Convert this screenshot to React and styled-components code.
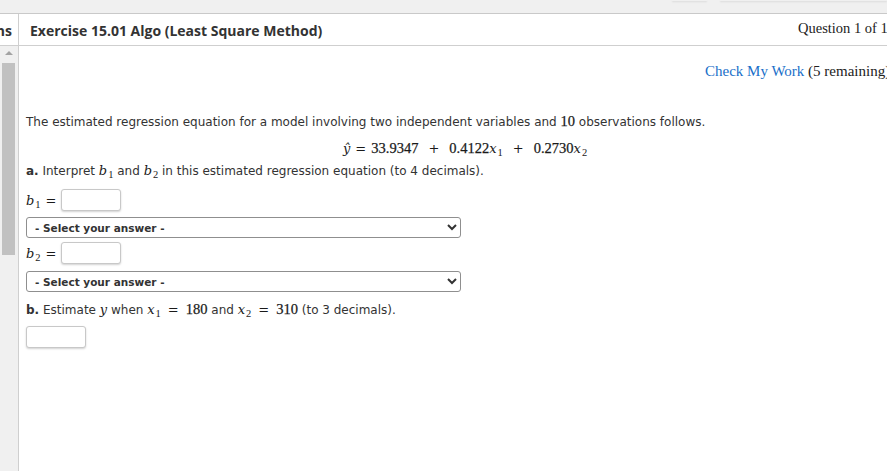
import React from "react";
import styled, { createGlobalStyle } from "styled-components";

const Global = createGlobalStyle`
  html, body {
    margin: 0;
    padding: 0;
    overflow: hidden;
    background: #fff;
  }
`;

const Page = styled.div`
  width: 887px;
  height: 471px;
  overflow: hidden;
  display: flex;
  flex-direction: column;
  background: #fff;
`;

const TopBar = styled.div`
  height: 13px;
  flex-shrink: 0;
  background: #f0f0f0;
  border-bottom: 1px solid #c9c9c9;
  display: flex;
  justify-content: flex-end;
  align-items: flex-start;
  gap: 13px;
`;

const GhostButton = styled.div`
  width: ${(p) => p.$w}px;
  height: 1px;
  box-shadow: 0 1px 2px rgba(0, 0, 0, 0.12);
`;

const Main = styled.div`
  flex: 1;
  display: flex;
  min-height: 0;
`;

const Sidebar = styled.div`
  width: 18px;
  flex-shrink: 0;
  border-right: 1px solid #cfcfcf;
  display: flex;
  flex-direction: column;
  overflow: hidden;
`;

const SideHead = styled.div`
  height: 31px;
  border-bottom: 1px solid #cfcfcf;
  display: flex;
  align-items: center;
  justify-content: flex-end;
  padding-right: 6px;
  overflow: hidden;
  font-family: "Open Sans", sans-serif;
  font-weight: 700;
  font-size: 14px;
  color: #333;
  white-space: nowrap;
`;

const SideLabel = styled.span`
  flex-shrink: 0;
  margin-top: 2px;
`;

const SideBody = styled.div`
  flex: 1;
  background: #f0f0f0;
  display: flex;
  flex-direction: column;
  align-items: center;
  padding-top: 5px;
`;

const ScrollArrow = styled.div`
  width: 0;
  height: 0;
  border-left: 4px solid transparent;
  border-right: 4px solid transparent;
  border-bottom: 4px solid #a3a3a3;
  margin-right: 1px;
`;

const ScrollThumb = styled.div`
  width: 13px;
  height: 192px;
  margin-top: 8px;
  margin-right: 1px;
  background: #c1c1c1;
`;

const Content = styled.div`
  width: 900px;
  flex-shrink: 0;
  display: flex;
  flex-direction: column;
`;

const Header = styled.div`
  height: 31px;
  border-bottom: 1px solid #cfcfcf;
  display: flex;
  align-items: center;
  justify-content: space-between;
  padding: 0 0 0 11px;
`;

const Title = styled.div`
  font-family: "Open Sans", sans-serif;
  font-weight: 700;
  font-size: 14px;
  color: #333;
  margin-top: 2px;
`;

const QuestionCount = styled.div`
  font-family: "Liberation Serif", serif;
  font-size: 14.5px;
  color: #222;
  white-space: nowrap;
  width: 121px;
  margin-top: -2px;
`;

const Body = styled.div`
  padding: 0 7px;
  display: flex;
  flex-direction: column;
  align-items: flex-start;
  font-family: "DejaVu Sans", Verdana, sans-serif;
  font-size: 12px;
  color: #333;
`;

const Block = styled.div`
  margin-top: ${(p) => p.$mt || 0}px;
  line-height: ${(p) => p.$lh || 18}px;
  white-space: nowrap;
`;

const CheckRow = styled.div`
  align-self: stretch;
  margin-top: 16px;
  height: 18px;
  line-height: 18px;
  padding-left: 679px;
  font-family: "Liberation Serif", serif;
  font-size: 15px;
  color: #222;
  white-space: nowrap;
`;

const CheckLink = styled.a`
  color: #1a6fc9;
  text-decoration: none;
`;

const Equation = styled.div`
  align-self: stretch;
  margin-top: 7px;
  line-height: 20px;
  padding-left: 317px;
  white-space: nowrap;
`;

const Num = styled.span`
  font-family: "Liberation Serif", serif;
  font-size: 14.5px;
  color: #1a1a1a;
  -webkit-text-stroke: 0.25px #1a1a1a;
`;

const VarName = styled.span`
  font-family: "DejaVu Serif", serif;
  font-style: italic;
  font-size: 13px;
  color: #1a1a1a;
`;

const Sub = styled.sub`
  font-family: "Liberation Serif", serif;
  font-style: normal;
  font-size: 10.5px;
  vertical-align: -3px;
  line-height: 0;
  margin-left: 1px;
`;

const Op = styled.span`
  font-family: "DejaVu Serif", serif;
  font-size: 13px;
  color: #1a1a1a;
  margin: 0 ${(p) => p.$m || 4}px;
`;

const Strong = styled.b`
  font-weight: 700;
`;

const AnswerRow = styled.div`
  margin-top: ${(p) => p.$mt}px;
  height: 22px;
  display: flex;
  align-items: center;
`;

const Input = styled.input`
  width: ${(p) => p.$w || 60}px;
  height: 22px;
  box-sizing: border-box;
  border: 1px solid #c8c8c8;
  border-radius: 3px;
  box-shadow: 0 1px 2px rgba(0, 0, 0, 0.18);
  background: #fff;
  padding: 0 4px;
  font-size: 12px;
  outline: none;
`;

const Select = styled.select`
  margin-top: ${(p) => p.$mt}px;
  width: 435px;
  height: 21px;
  box-sizing: border-box;
  border: 1px solid #8f8f8f;
  border-radius: 3px;
  background: #fff;
  font-family: "DejaVu Sans", Verdana, sans-serif;
  font-weight: 700;
  font-size: 10.5px;
  color: #333;
  padding: 0 4px;
`;

const Var = ({ n, sub }) => (
  <VarName>
    {n}
    {sub && <Sub>{sub}</Sub>}
  </VarName>
);

export default function App() {
  return (
    <Page>
      <Global />
      <TopBar>
        <GhostButton $w={35} />
        <GhostButton $w={167} />
      </TopBar>
      <Main>
        <Sidebar>
          <SideHead>
            <SideLabel>Questions</SideLabel>
          </SideHead>
          <SideBody>
            <ScrollArrow />
            <ScrollThumb />
          </SideBody>
        </Sidebar>
        <Content>
          <Header>
            <Title>Exercise 15.01 Algo (Least Square Method)</Title>
            <QuestionCount>Question 1 of 16</QuestionCount>
          </Header>
          <Body>
            <CheckRow>
              <CheckLink href="#">Check My Work</CheckLink> (5 remaining)
            </CheckRow>
            <Block $mt={32}>
              The estimated regression equation for a model involving two
              independent variables and <Num>10</Num> observations follows.
            </Block>
            <Equation>
              <VarName>ŷ</VarName>
              <Op $m={5}>=</Op>
              <Num>33.9347</Num>
              <Op $m={10}>+</Op>
              <Num>0.4122</Num>
              <Var n="x" sub="1" />
              <Op $m={10}>+</Op>
              <Num>0.2730</Num>
              <Var n="x" sub="2" />
            </Equation>
            <Block $mt={3}>
              <Strong>a.</Strong> Interpret <Var n="b" sub="1" /> and{" "}
              <Var n="b" sub="2" /> in this estimated regression equation (to
              4 decimals).
            </Block>
            <AnswerRow $mt={9}>
              <Var n="b" sub="1" />
              <Op $m={5}>=</Op>
              <Input />
            </AnswerRow>
            <Select $mt={6} defaultValue="">
              <option value="">- Select your answer -</option>
            </Select>
            <AnswerRow $mt={4}>
              <Var n="b" sub="2" />
              <Op $m={5}>=</Op>
              <Input />
            </AnswerRow>
            <Select $mt={7} defaultValue="">
              <option value="">- Select your answer -</option>
            </Select>
            <Block $mt={8}>
              <Strong>b.</Strong> Estimate <Var n="y" /> when{" "}
              <Var n="x" sub="1" />
              <Op $m={7}>=</Op>
              <Num>180</Num> and <Var n="x" sub="2" />
              <Op $m={7}>=</Op>
              <Num>310</Num> (to 3 decimals).
            </Block>
            <AnswerRow $mt={7}>
              <Input />
            </AnswerRow>
          </Body>
        </Content>
      </Main>
    </Page>
  );
}
